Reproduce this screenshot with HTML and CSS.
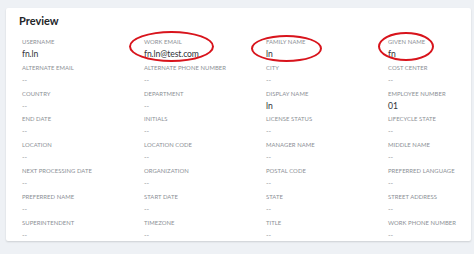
FILE: index.html
```html
<!DOCTYPE html>
<html>
<head>
<meta charset="utf-8">
<link rel="stylesheet" href="styles.css">
</head>
<body>
<div class="card">
  <h2 class="title">Preview</h2>
  <div class="grid">
    <div class="field"><div class="label">Username</div><div class="value">fn.ln</div></div>
    <div class="field mark mark-email"><div class="label">Work Email</div><div class="value">fn.ln@test.com</div></div>
    <div class="field mark mark-family"><div class="label">Family Name</div><div class="value">ln</div></div>
    <div class="field mark mark-given"><div class="label">Given Name</div><div class="value">fn</div></div>

    <div class="field"><div class="label">Alternate Email</div><div class="value empty">--</div></div>
    <div class="field"><div class="label">Alternate Phone Number</div><div class="value empty">--</div></div>
    <div class="field"><div class="label">City</div><div class="value empty">--</div></div>
    <div class="field"><div class="label">Cost Center</div><div class="value empty">--</div></div>

    <div class="field"><div class="label">Country</div><div class="value empty">--</div></div>
    <div class="field"><div class="label">Department</div><div class="value empty">--</div></div>
    <div class="field"><div class="label">Display Name</div><div class="value">ln</div></div>
    <div class="field"><div class="label">Employee Number</div><div class="value">01</div></div>

    <div class="field"><div class="label">End Date</div><div class="value empty">--</div></div>
    <div class="field"><div class="label">Initials</div><div class="value empty">--</div></div>
    <div class="field"><div class="label">License Status</div><div class="value empty">--</div></div>
    <div class="field"><div class="label">Lifecycle State</div><div class="value empty">--</div></div>

    <div class="field"><div class="label">Location</div><div class="value empty">--</div></div>
    <div class="field"><div class="label">Location Code</div><div class="value empty">--</div></div>
    <div class="field"><div class="label">Manager Name</div><div class="value empty">--</div></div>
    <div class="field"><div class="label">Middle Name</div><div class="value empty">--</div></div>

    <div class="field"><div class="label">Next Processing Date</div><div class="value empty">--</div></div>
    <div class="field"><div class="label">Organization</div><div class="value empty">--</div></div>
    <div class="field"><div class="label">Postal Code</div><div class="value empty">--</div></div>
    <div class="field"><div class="label">Preferred Language</div><div class="value empty">--</div></div>

    <div class="field"><div class="label">Preferred Name</div><div class="value empty">--</div></div>
    <div class="field"><div class="label">Start Date</div><div class="value empty">--</div></div>
    <div class="field"><div class="label">State</div><div class="value empty">--</div></div>
    <div class="field"><div class="label">Street Address</div><div class="value empty">--</div></div>

    <div class="field"><div class="label">Superintendent</div><div class="value empty">--</div></div>
    <div class="field"><div class="label">Timezone</div><div class="value empty">--</div></div>
    <div class="field"><div class="label">Title</div><div class="value empty">--</div></div>
    <div class="field"><div class="label">Work Phone Number</div><div class="value empty">--</div></div>
  </div>
</div>
</body>
</html>
```
FILE: styles.css
```css
html, body {
  margin: 0;
  padding: 0;
}
body {
  background: #eef1f5;
  width: 474px;
  height: 254px;
  overflow: hidden;
  padding: 8px 3px 0 6px;
  box-sizing: border-box;
  font-family: "Lato", "Open Sans", sans-serif;
}
.card {
  background: #ffffff;
  width: 465px;
  height: 233px;
  box-sizing: border-box;
  padding: 6px 0 0 16px;
  border-radius: 2px;
  box-shadow: 0 1px 2px rgba(0, 0, 0, 0.14);
  overflow: hidden;
}
.title {
  margin: 0 0 9px -3px;
  font-size: 11px;
  line-height: 14px;
  font-weight: 700;
  color: #222529;
}
.grid {
  display: grid;
  grid-template-columns: 122px 122px 122px 1fr;
  grid-template-rows: repeat(7, 25.8px) 22px;
}
.field {
  position: relative;
}
.label {
  font-size: 5.9px;
  line-height: 10px;
  text-transform: uppercase;
  color: #8c9096;
  letter-spacing: 0.05px;
  white-space: nowrap;
}
.value {
  padding-top: 1px;
  font-size: 8.6px;
  line-height: 12px;
  letter-spacing: -0.1px;
  color: #2f3338;
  white-space: nowrap;
}
.value.empty {
  font-size: 7px;
  letter-spacing: 0;
  color: #9a9ea4;
}
.mark::after {
  content: "";
  position: absolute;
  border: 2.2px solid #d8141c;
  border-radius: 50%;
  box-sizing: border-box;
}
.mark-email::after {
  left: -15px;
  top: -6px;
  width: 85px;
  height: 31px;
}
.mark-family::after {
  left: -15px;
  top: -2px;
  width: 71px;
  height: 27px;
}
.mark-given::after {
  left: -10px;
  top: -5px;
  width: 56px;
  height: 29px;
}
```
